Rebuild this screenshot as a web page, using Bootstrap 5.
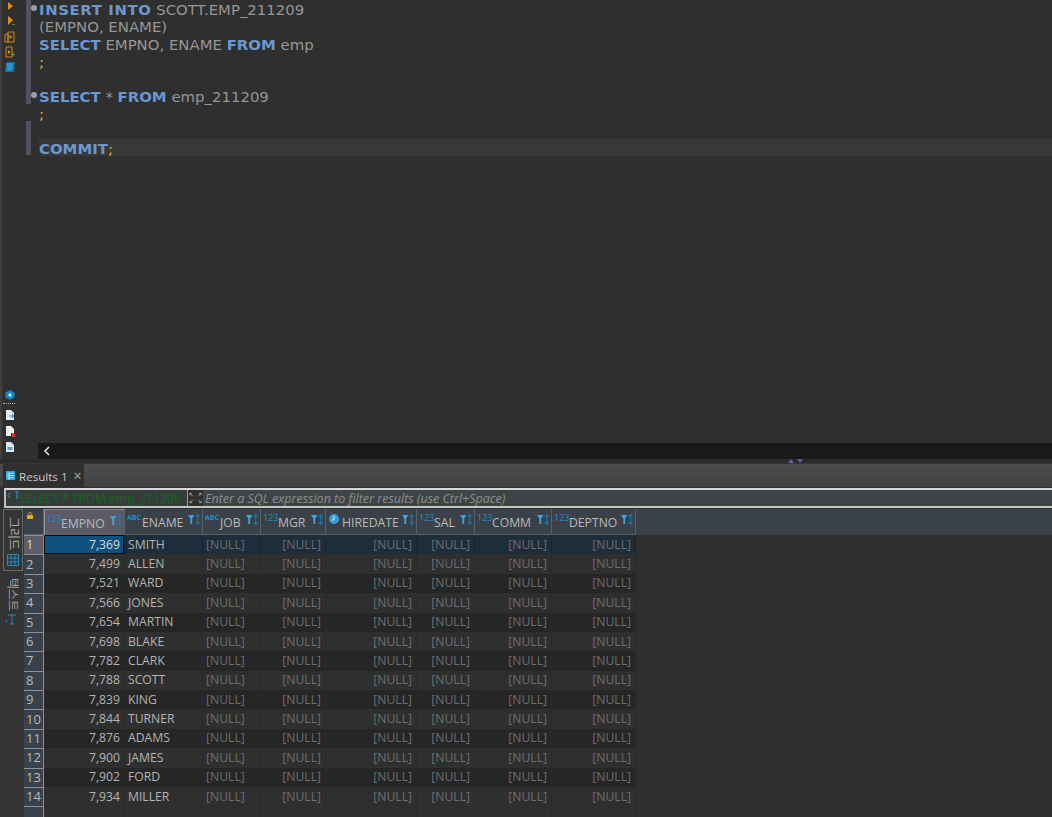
<!DOCTYPE html>
<html lang="en">
<head>
<meta charset="utf-8">
<title>SQL editor</title>
<link rel="stylesheet" href="https://cdn.jsdelivr.net/npm/bootstrap@5.3.0/dist/css/bootstrap.min.css">
<style>
html,body{height:100%;margin:0;background:#2f2f2f;overflow:hidden}
.ide{width:1052px;height:817px;font-family:"Open Sans","Noto Sans CJK KR",sans-serif;font-size:12.2px;color:#b5b5b5}
.edit-pane{height:459px;background:#2f2f2f;border-left:2px solid #3f3f3f}
.tool-rail{width:24px}
.tool-rail svg{display:block;width:12px;height:12px;margin:0 0 3.3px 1px}
.tool-low{margin-top:auto;padding-bottom:2px}
.tool-low svg{margin-bottom:4px}
.tool-low svg.ico-first{margin-bottom:2px}
.tool-dots{width:12px;margin:0 0 5px 1px;border-top:1px dotted #bbb}
.mark-bar{width:5px}
.mark-a{height:104px;background:#574f5c}
.mark-gap{height:17px}
.mark-b{height:34px;background:#574f5c}
.code-col{min-width:0;padding-left:8px}
.code-lines{font-family:"DejaVu Sans",sans-serif;font-size:14.9px;line-height:20px;color:#969696;flex:1 1 auto}
.code-row{height:17.33px;white-space:pre;position:relative}
.code-now{background:#383838}
.kw{color:#6a98cf;font-weight:700}
.kw-wide{letter-spacing:.6px}
.semi{color:#dcae30}
.fold-dot{position:absolute;left:-8px;top:5px;width:6px;height:6px;border-radius:50%;background:#9aa0a6}
.h-scroll{height:16px;background:#191919;margin-left:-1px;padding-left:4px;color:#ddd}
.h-scroll svg{width:10px;height:10px}
.sash{height:4px;background:#2c2c2c;position:relative}
.sash svg{position:absolute;left:787px;top:-2px;width:18px;height:6px}
.tab-strip{height:25px;background:linear-gradient(#4b4c4e,#414141);border-top:1px solid #353535;border-bottom:1px solid #2f2f2f}
.tab-on{width:81px;margin-left:3px;height:100%;background:#2f2f2f;color:#c8c8c8;padding:3px 0 0 3px;gap:4px;white-space:nowrap;font-size:11.6px}
.tab-on svg{width:9px;height:11px;flex:none;margin-top:-4px}
.tab-x{color:#aaa;font-size:14px;margin-left:2px;margin-top:-3px;line-height:14px}
.filter-row{height:20px;background:#3f4546;border-top:2px solid #d8d8d8;border-bottom:2px solid #c4c4c4;border-left:2px solid #bdbdbd;margin-left:4px;font-size:12.5px;line-height:16px;white-space:nowrap}
.filter-sql{color:#11691a;width:181px;padding:1px 0 0 1px;gap:0;overflow:hidden;background:#363b3c;height:100%;font-size:12px;flex:none}
.filter-sql svg{width:12px;height:9px;flex:none;align-self:flex-start}
.filter-exp{width:16px;height:100%;background:#303030;border-left:1px solid #9a9a9a;padding:2px 1px;flex:none}
.filter-exp svg{display:block;width:13px;height:12px}
.filter-hint{font-style:italic;color:#8b8f8f;padding:1px 0 0 2px}
.grid-zone{height:309px;padding-top:1px;background:#2f2f2f}
.side-tabs{width:24px;background:#343434;padding-left:3px;flex:none}
.side-one{width:20px;height:62px;border:1px solid #6a6a6a;padding-top:7px;color:#b0b0b0}
.side-two{width:20px;padding-top:7px;color:#a0a0a0}
.side-word{writing-mode:vertical-rl;text-orientation:sideways;font-size:12px;line-height:18px;width:18px;display:block}
.side-one svg,.side-two svg{display:block;width:12px;height:12px;margin:4px 0 0 3px}
.side-two svg{margin-top:2px}
.res-wrap{min-width:0;overflow:hidden}
.res-table.table{--bs-table-bg:transparent;--bs-table-color:#b4b4b4;--bs-border-width:0;border-collapse:separate;border-spacing:0;table-layout:fixed;width:100%;margin:0;color:#b4b4b4;font-size:12.2px}
.res-table.table>:not(caption)>*>*{padding:0 4px 1px 3px;border:0;box-shadow:none;line-height:17px;height:19.38px;white-space:nowrap;overflow:hidden;font-weight:400;vertical-align:middle;border-right:1px solid #2a2a2a}
.res-table.table>thead>tr>th{height:26px;background:#3a4148;border-right:1px solid #596068;border-bottom:1px solid #596068;padding:0 2px;color:#b9b9b9;vertical-align:top}
.res-table.table>thead>tr>th.col-on{background:#5b5a66;border-left:1px solid #9a9a9a;border-top:1px solid #888;padding-left:1px}
.res-table.table>thead>tr>th.col-fill{border:0}
.res-table.table>tbody>tr>th{background:#39424a;color:#b9b9b9;border-top:1px solid #8a9197;border-right:1px solid #8a9197;padding:0 0 1px 2px;font-size:13px}
.res-table.table>tbody>tr>th.row-on{background:#5f5d69;color:#d5d5d5}
.res-table.table>tbody>tr>td{text-align:right;color:#6c6e70}
.res-table.table>tbody>tr>td.num{color:#b4b4b4}
.res-table.table>tbody>tr>td.txt{text-align:left;color:#b4b4b4}
.res-table.table>tbody>tr>td.nul{text-align:left;color:#6c6e70}
.res-table.table>tbody>tr.row-a>td{background:#2f2f2f}
.res-table.table>tbody>tr.row-b>td{background:#262626}
.res-table.table>tbody>tr.row-sel>td{background:#1f2d3a;border-right-color:#1a2530}
.res-table.table>tbody>tr.row-sel>td.cell-on{background:#10507f;color:#d8d8d8;box-shadow:inset 0 0 0 1px #0a0a0a}
.res-table.table>tbody>tr.row-end>th{background:#39424a;height:11px}
.res-table.table>tbody>tr.row-end>td{background:#2f2f2f;height:11px}
.res-table.table>tbody>tr>td.col-fill{background:#2f2f2f;border:0}
.head-cell{height:100%}
.type-tag{font-size:9px;line-height:10px;color:#1f8fc7;flex:none;width:15px;margin-top:4px}
.type-abc{font-size:7px;font-weight:700}
.head-name{margin-top:4px;line-height:19px;font-size:12.2px}
.sort-ico{margin-left:auto;width:12px;height:11px;flex:none;margin-top:5px}
.clock-ico{width:10px;height:10px;flex:none;margin:5px 3px 0 1px}
.lock-ico{display:block;width:6px;height:7px;margin:3px 0 0 1px}
</style>
</head>
<body>
<div class="ide d-flex flex-column">
  <section class="edit-pane d-flex">
    <div class="tool-rail d-flex flex-column">
      <svg viewBox="0 0 12 12"><path d="M5 2l5 4-5 4z" fill="#e08a12"/></svg>
      <svg viewBox="0 0 12 12"><path d="M5 1l5 4-5 5z" fill="#e08a12"/><path d="M9 9h3v1H9z" fill="#3a9a3a"/></svg>
      <svg viewBox="0 0 12 12"><path d="M5 1h6v10H5z" fill="none" stroke="#d98514"/><path d="M2 3h3v8H2z" fill="none" stroke="#d98514"/><path d="M6.500 4l3 2-3 2z" fill="#e08a12"/></svg>
      <svg viewBox="0 0 12 12"><path d="M3 1h6v10H3z" fill="none" stroke="#d98514"/><path d="M5 4l3 2-3 2z" fill="#e08a12"/><path d="M8 8h4v1H8zM9.500 6.500h1v4h-1z" fill="#48a848"/></svg>
      <svg viewBox="0 0 12 12"><path d="M3 1h9l-1 10H2z" fill="#0f6fa0"/><path d="M4 3h6M4 5h6M4 7h6M3.500 9h5" stroke="#4fb6e6"/></svg>
      <div class="tool-low">
        <svg class="ico-first" viewBox="0 0 12 12"><path d="M7 1l4.500 2.500v5L7 11 2.500 8.500v-5z" fill="#1388c8"/><circle cx="7" cy="6" r="1.700" fill="#bfe6fa"/></svg>
        <div class="tool-dots"></div>
        <svg viewBox="0 0 12 12"><path d="M3 1h5l3 3v7H3z" fill="#e6eef5"/><path d="M6 7h5M9 5l2 2-2 2" stroke="#2b7fc0" fill="none"/></svg>
        <svg viewBox="0 0 12 12"><path d="M3 1h5l3 3v4H8v3H3z" fill="#f0f0f0"/><path d="M9 8h3v4H9z" fill="#d33"/></svg>
        <svg viewBox="0 0 12 12"><path d="M3 1h5l3 3v7H3z" fill="#dce6f0"/><path d="M4.500 6h5v3h-5z" fill="#6b9bc8"/></svg>
      </div>
    </div>
    <div class="mark-bar flex-shrink-0">
      <div class="mark-a"></div>
      <div class="mark-gap"></div>
      <div class="mark-b"></div>
    </div>
    <div class="code-col flex-grow-1 d-flex flex-column">
      <div class="code-lines">
        <div class="code-row"><span class="fold-dot"></span><span class="kw kw-wide">INSERT INTO</span> SCOTT.EMP_211209</div>
        <div class="code-row">(EMPNO, ENAME)</div>
        <div class="code-row"><span class="kw">SELECT</span> EMPNO, ENAME <span class="kw">FROM</span> emp</div>
        <div class="code-row"><span class="semi">;</span></div>
        <div class="code-row"></div>
        <div class="code-row"><span class="fold-dot"></span><span class="kw">SELECT</span> * <span class="kw">FROM</span> emp_211209</div>
        <div class="code-row"><span class="semi">;</span></div>
        <div class="code-row"></div>
        <div class="code-row code-now"><span class="kw">COMMIT</span><span class="semi">;</span></div>
      </div>
      <div class="h-scroll d-flex align-items-center">
        <svg viewBox="0 0 10 10"><path d="M7 1L3 5l4 4" fill="none" stroke="#ddd" stroke-width="1.600"/></svg>
      </div>
    </div>
  </section>
  <div class="sash">
    <svg viewBox="0 0 18 6"><path d="M1 6l3-4 3 4zM10 2h6l-3 4z" fill="#5f5fa8"/></svg>
  </div>
  <div class="tab-strip d-flex">
    <div class="tab-on d-flex align-items-center">
      <svg viewBox="0 0 10 12"><path d="M0 1h10v10H0z" fill="#2aa0dc"/><path d="M1 3.500h8M1 6h8M1 8.500h8M3.500 3v8" stroke="#dff2fc" stroke-width=".8"/></svg>
      <span>Results 1</span>
      <span class="tab-x">×</span>
    </div>
  </div>
  <div class="filter-row d-flex align-items-center">
    <div class="filter-sql d-flex">
      <svg viewBox="0 0 12 9"><path d="M3 2L1 4.500 3 7M8 1h4M10 1v7" fill="none" stroke="#2a9ad0" stroke-width="1"/></svg>
      <span>SELECT * FROM emp_211209</span>
    </div>
    <div class="filter-exp">
      <svg viewBox="0 0 14 12"><path d="M1 1l3 3M1 1h2M1 1v2M13 1l-3 3M13 1h-2M13 1v2M1 11l3-3M1 11h2M1 11V9M13 11l-3-3M13 11h-2M13 11V9" stroke="#a8a8a8" fill="none"/></svg>
    </div>
    <div class="filter-hint">Enter a SQL expression to filter results (use Ctrl+Space)</div>
  </div>
  <div class="grid-zone d-flex">
    <div class="side-tabs">
      <div class="side-one">
        <span class="side-word">그리드</span>
        <svg viewBox="0 0 12 12"><path d="M.5.500h11v11H.500zM.5 4h11M.5 8h11M4 .5v11M8 .5v11" fill="none" stroke="#1d8cc4"/></svg>
      </div>
      <div class="side-two">
        <span class="side-word">텍스트</span>
        <svg viewBox="0 0 12 12"><path d="M2 2h8M6 2v9M1 7L0 8l1 1M4 11h4" fill="none" stroke="#1d8cc4"/></svg>
      </div>
    </div>
    <div class="res-wrap flex-grow-1">
      <table class="table res-table">
        <colgroup>
          <col style="width:20px"><col style="width:81px"><col style="width:78px"><col style="width:58px"><col style="width:65px"><col style="width:91px"><col style="width:58px"><col style="width:77px"><col style="width:84px"><col>
        </colgroup>
        <thead>
          <tr>
            <th><svg class="lock-ico" viewBox="0 0 8 9"><path d="M2 4V2.500a2 2 0 0 1 4 0V4" fill="none" stroke="#d9a520"/><path d="M0 4h8v5H0z" fill="#e6b422"/></svg></th>
            <th class="col-on"><div class="head-cell d-flex"><span class="type-tag">123</span><span class="head-name">EMPNO</span><svg class="sort-ico" viewBox="0 0 13 12"><path d="M0 1h7L4.500 5v6h-2V5z" fill="#3ea6dc"/><path d="M10.500 0v12M8.500 3l2-2.500 2 2.500M8.500 9l2 2.500 2-2.500" fill="none" stroke="#1d78ac" stroke-width="1.200"/></svg></div></th>
            <th><div class="head-cell d-flex"><span class="type-tag type-abc">ABC</span><span class="head-name">ENAME</span><svg class="sort-ico" viewBox="0 0 13 12"><path d="M0 1h7L4.500 5v6h-2V5z" fill="#3ea6dc"/><path d="M10.500 0v12M8.500 3l2-2.500 2 2.500M8.500 9l2 2.500 2-2.500" fill="none" stroke="#1d78ac" stroke-width="1.200"/></svg></div></th>
            <th><div class="head-cell d-flex"><span class="type-tag type-abc">ABC</span><span class="head-name">JOB</span><svg class="sort-ico" viewBox="0 0 13 12"><path d="M0 1h7L4.500 5v6h-2V5z" fill="#3ea6dc"/><path d="M10.500 0v12M8.500 3l2-2.500 2 2.500M8.500 9l2 2.500 2-2.500" fill="none" stroke="#1d78ac" stroke-width="1.200"/></svg></div></th>
            <th><div class="head-cell d-flex"><span class="type-tag">123</span><span class="head-name">MGR</span><svg class="sort-ico" viewBox="0 0 13 12"><path d="M0 1h7L4.500 5v6h-2V5z" fill="#3ea6dc"/><path d="M10.500 0v12M8.500 3l2-2.500 2 2.500M8.500 9l2 2.500 2-2.500" fill="none" stroke="#1d78ac" stroke-width="1.200"/></svg></div></th>
            <th><div class="head-cell d-flex"><svg class="clock-ico" viewBox="0 0 10 10"><circle cx="5" cy="5" r="5" fill="#3a9bdc"/><path d="M5 2v3.300L3 6.500" fill="none" stroke="#eaf6fd"/></svg><span class="head-name">HIREDATE</span><svg class="sort-ico" viewBox="0 0 13 12"><path d="M0 1h7L4.500 5v6h-2V5z" fill="#3ea6dc"/><path d="M10.500 0v12M8.500 3l2-2.500 2 2.500M8.500 9l2 2.500 2-2.500" fill="none" stroke="#1d78ac" stroke-width="1.200"/></svg></div></th>
            <th><div class="head-cell d-flex"><span class="type-tag">123</span><span class="head-name">SAL</span><svg class="sort-ico" viewBox="0 0 13 12"><path d="M0 1h7L4.500 5v6h-2V5z" fill="#3ea6dc"/><path d="M10.500 0v12M8.500 3l2-2.500 2 2.500M8.500 9l2 2.500 2-2.500" fill="none" stroke="#1d78ac" stroke-width="1.200"/></svg></div></th>
            <th><div class="head-cell d-flex"><span class="type-tag">123</span><span class="head-name">COMM</span><svg class="sort-ico" viewBox="0 0 13 12"><path d="M0 1h7L4.500 5v6h-2V5z" fill="#3ea6dc"/><path d="M10.500 0v12M8.500 3l2-2.500 2 2.500M8.500 9l2 2.500 2-2.500" fill="none" stroke="#1d78ac" stroke-width="1.200"/></svg></div></th>
            <th><div class="head-cell d-flex"><span class="type-tag">123</span><span class="head-name">DEPTNO</span><svg class="sort-ico" viewBox="0 0 13 12"><path d="M0 1h7L4.500 5v6h-2V5z" fill="#3ea6dc"/><path d="M10.500 0v12M8.500 3l2-2.500 2 2.500M8.500 9l2 2.500 2-2.500" fill="none" stroke="#1d78ac" stroke-width="1.200"/></svg></div></th>
            <th class="col-fill"></th>
          </tr>
        </thead>
        <tbody>
          <tr class="row-sel"><th class="row-on">1</th><td class="num cell-on">7,369</td><td class="txt">SMITH</td><td class="nul">[NULL]</td><td>[NULL]</td><td>[NULL]</td><td>[NULL]</td><td>[NULL]</td><td>[NULL]</td><td class="col-fill"></td></tr>
          <tr class="row-a"><th>2</th><td class="num">7,499</td><td class="txt">ALLEN</td><td class="nul">[NULL]</td><td>[NULL]</td><td>[NULL]</td><td>[NULL]</td><td>[NULL]</td><td>[NULL]</td><td class="col-fill"></td></tr>
          <tr class="row-b"><th>3</th><td class="num">7,521</td><td class="txt">WARD</td><td class="nul">[NULL]</td><td>[NULL]</td><td>[NULL]</td><td>[NULL]</td><td>[NULL]</td><td>[NULL]</td><td class="col-fill"></td></tr>
          <tr class="row-a"><th>4</th><td class="num">7,566</td><td class="txt">JONES</td><td class="nul">[NULL]</td><td>[NULL]</td><td>[NULL]</td><td>[NULL]</td><td>[NULL]</td><td>[NULL]</td><td class="col-fill"></td></tr>
          <tr class="row-b"><th>5</th><td class="num">7,654</td><td class="txt">MARTIN</td><td class="nul">[NULL]</td><td>[NULL]</td><td>[NULL]</td><td>[NULL]</td><td>[NULL]</td><td>[NULL]</td><td class="col-fill"></td></tr>
          <tr class="row-a"><th>6</th><td class="num">7,698</td><td class="txt">BLAKE</td><td class="nul">[NULL]</td><td>[NULL]</td><td>[NULL]</td><td>[NULL]</td><td>[NULL]</td><td>[NULL]</td><td class="col-fill"></td></tr>
          <tr class="row-b"><th>7</th><td class="num">7,782</td><td class="txt">CLARK</td><td class="nul">[NULL]</td><td>[NULL]</td><td>[NULL]</td><td>[NULL]</td><td>[NULL]</td><td>[NULL]</td><td class="col-fill"></td></tr>
          <tr class="row-a"><th>8</th><td class="num">7,788</td><td class="txt">SCOTT</td><td class="nul">[NULL]</td><td>[NULL]</td><td>[NULL]</td><td>[NULL]</td><td>[NULL]</td><td>[NULL]</td><td class="col-fill"></td></tr>
          <tr class="row-b"><th>9</th><td class="num">7,839</td><td class="txt">KING</td><td class="nul">[NULL]</td><td>[NULL]</td><td>[NULL]</td><td>[NULL]</td><td>[NULL]</td><td>[NULL]</td><td class="col-fill"></td></tr>
          <tr class="row-a"><th>10</th><td class="num">7,844</td><td class="txt">TURNER</td><td class="nul">[NULL]</td><td>[NULL]</td><td>[NULL]</td><td>[NULL]</td><td>[NULL]</td><td>[NULL]</td><td class="col-fill"></td></tr>
          <tr class="row-b"><th>11</th><td class="num">7,876</td><td class="txt">ADAMS</td><td class="nul">[NULL]</td><td>[NULL]</td><td>[NULL]</td><td>[NULL]</td><td>[NULL]</td><td>[NULL]</td><td class="col-fill"></td></tr>
          <tr class="row-a"><th>12</th><td class="num">7,900</td><td class="txt">JAMES</td><td class="nul">[NULL]</td><td>[NULL]</td><td>[NULL]</td><td>[NULL]</td><td>[NULL]</td><td>[NULL]</td><td class="col-fill"></td></tr>
          <tr class="row-b"><th>13</th><td class="num">7,902</td><td class="txt">FORD</td><td class="nul">[NULL]</td><td>[NULL]</td><td>[NULL]</td><td>[NULL]</td><td>[NULL]</td><td>[NULL]</td><td class="col-fill"></td></tr>
          <tr class="row-a"><th>14</th><td class="num">7,934</td><td class="txt">MILLER</td><td class="nul">[NULL]</td><td>[NULL]</td><td>[NULL]</td><td>[NULL]</td><td>[NULL]</td><td>[NULL]</td><td class="col-fill"></td></tr>
          <tr class="row-end"><th></th><td></td><td></td><td></td><td></td><td></td><td></td><td></td><td></td><td class="col-fill"></td></tr>
        </tbody>
      </table>
    </div>
  </div>
</div>
</body>
</html>
